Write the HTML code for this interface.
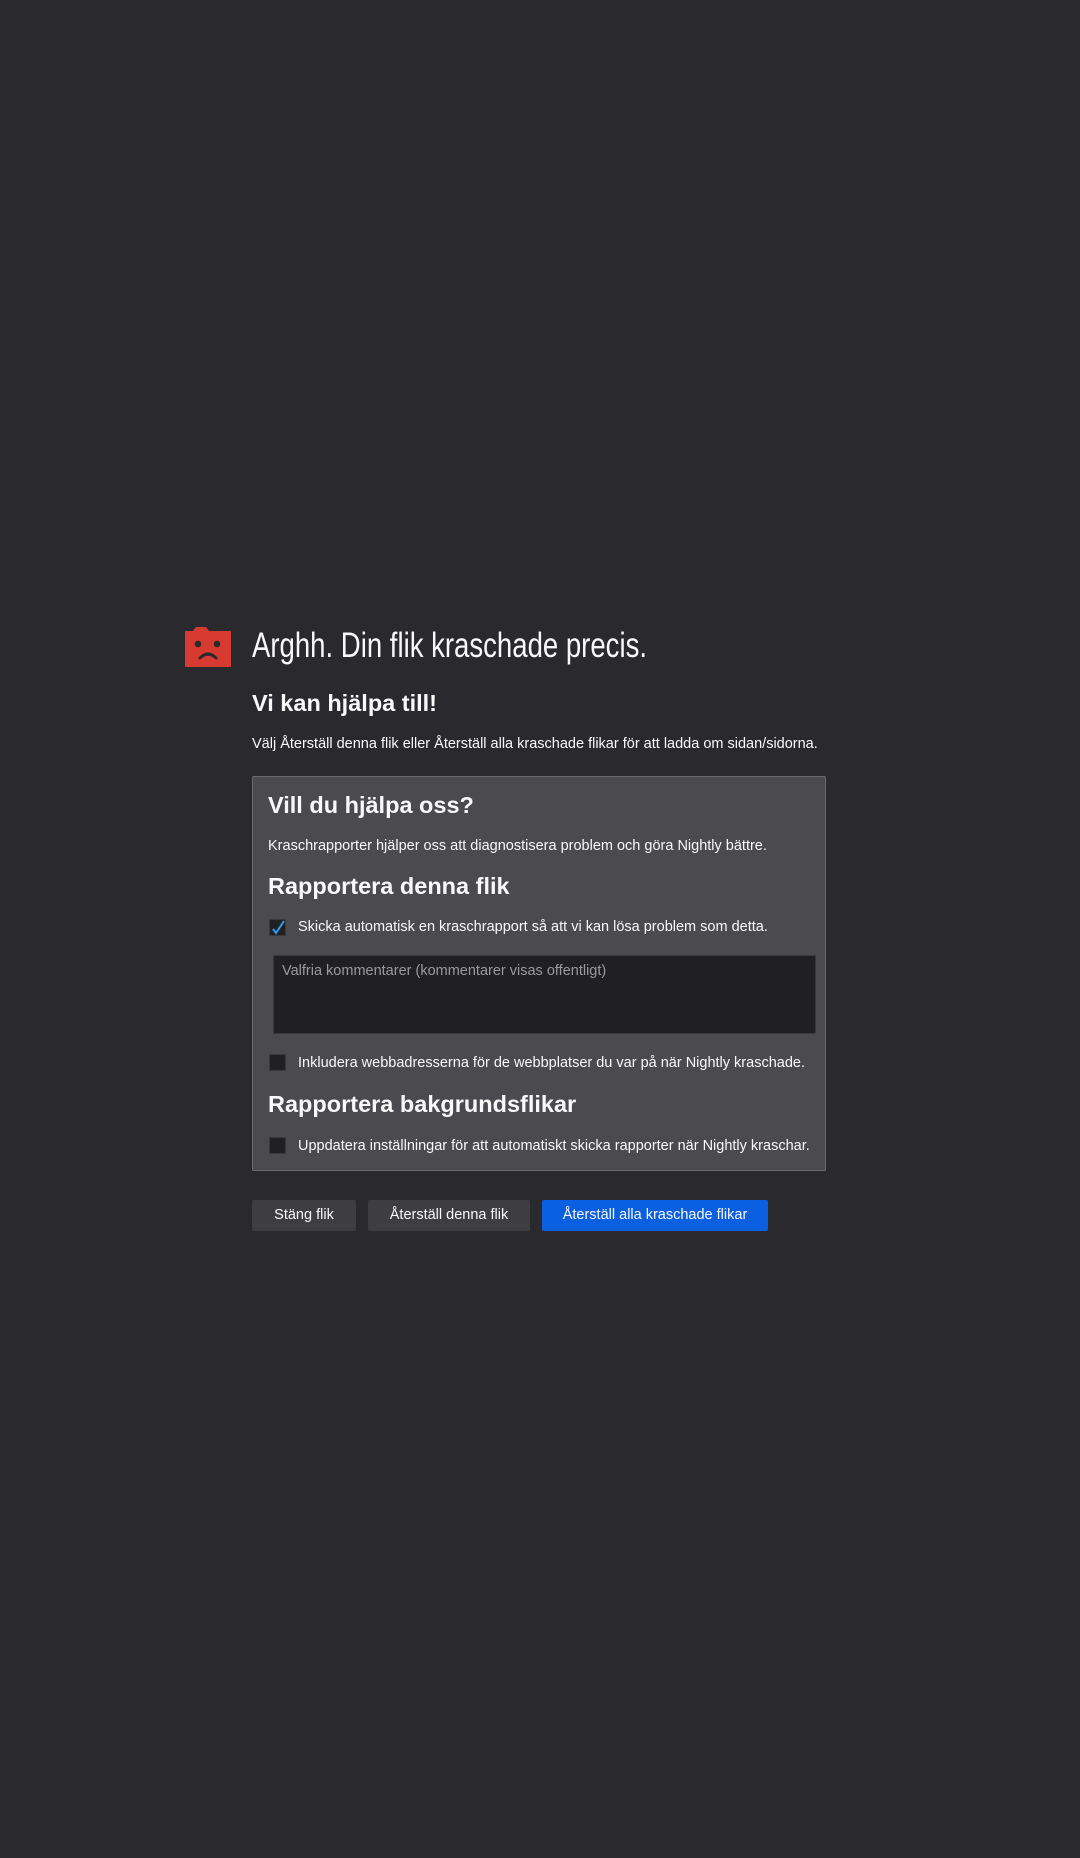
<!DOCTYPE html>
<html><head><meta charset="utf-8"><style>
html,body{margin:0;padding:0;background:#2a2a2e;width:1080px;height:1858px;overflow:hidden;font-family:"Liberation Sans",sans-serif;color:#f9f9fa}
.a{position:absolute;white-space:nowrap}
h2{margin:0;font-size:23.5px;font-weight:bold}
.p{font-size:14.5px;line-height:18px}
.box{position:absolute;left:252px;top:776px;width:572px;height:393px;background:#4a4a4f;border:1px solid #6a6a70;border-radius:2px}
.cb{position:absolute;width:17px;height:17px;background:#202023;border:1px solid #3a3a3e;box-sizing:border-box}
.ta{position:absolute;left:273px;top:955px;width:543px;height:79px;background:#202023;border:1px solid #38383d;box-sizing:border-box}
.btn{position:absolute;top:1200px;height:31px;line-height:31px;text-align:center;font-size:14.5px;background:#3d3d42;border-radius:2px}
</style></head><body>
<svg class="a" style="left:183px;top:625px" width="50" height="42" viewBox="0 0 50 42">
<path d="M2 6 h8 l3 -4 h10 l3 4 h22 v36 h-46z" fill="#d73a30"/>
<circle cx="15" cy="19" r="3.3" fill="#2a2a2e"/><circle cx="34" cy="19" r="3.3" fill="#2a2a2e"/>
<path d="M17 33 q8 -8 16 0" stroke="#2a2a2e" stroke-width="3" fill="none" stroke-linecap="round"/>
</svg>
<svg class="a" style="left:252px;top:620px" width="420" height="50"><text x="0" y="37" font-family="Liberation Sans" font-size="35" fill="#f9f9fa" textLength="395" lengthAdjust="spacingAndGlyphs">Arghh. Din flik kraschade precis.</text></svg>
<h2 class="a" style="left:252px;top:690px">Vi kan hjälpa till!</h2>
<div class="a p" style="left:252px;top:735px">Välj Återställ denna flik eller Återställ alla kraschade flikar för att ladda om sidan/sidorna.</div>
<div class="box"></div>
<h2 class="a" style="left:268px;top:792px">Vill du hjälpa oss?</h2>
<div class="a p" style="left:268px;top:837px">Kraschrapporter hjälper oss att diagnostisera problem och göra Nightly bättre.</div>
<h2 class="a" style="left:268px;top:873px">Rapportera denna flik</h2>
<div class="cb" style="left:269px;top:919px"></div>
<svg class="a" style="left:271px;top:919px" width="16" height="17"><path d="M2 10 l3 4 l8 -12" stroke="#2e9bf0" stroke-width="2" fill="none"/></svg>
<div class="a p" style="left:298px;top:918px">Skicka automatisk en kraschrapport så att vi kan lösa problem som detta.</div>
<div class="ta"></div>
<div class="a p" style="left:282px;top:962px;color:#9a9a9e">Valfria kommentarer (kommentarer visas offentligt)</div>
<div class="cb" style="left:269px;top:1054px"></div>
<div class="a p" style="left:298px;top:1054px">Inkludera webbadresserna för de webbplatser du var på när Nightly kraschade.</div>
<h2 class="a" style="left:268px;top:1091px">Rapportera bakgrundsflikar</h2>
<div class="cb" style="left:269px;top:1137px"></div>
<div class="a p" style="left:298px;top:1137px">Uppdatera inställningar för att automatiskt skicka rapporter när Nightly kraschar.</div>
<div class="btn" style="left:252px;width:104px">Stäng flik</div>
<div class="btn" style="left:368px;width:162px">Återställ denna flik</div>
<div class="btn" style="left:542px;width:226px;background:#0a60e0">Återställ alla kraschade flikar</div>
</body></html>
